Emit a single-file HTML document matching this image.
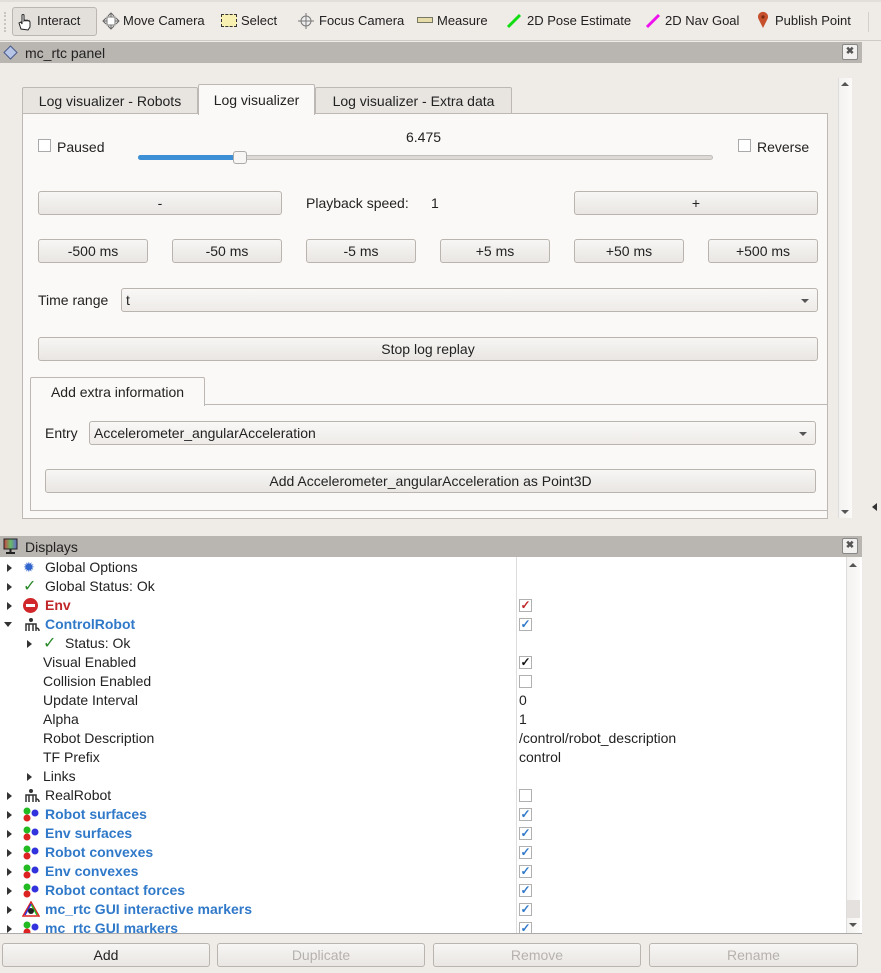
<!DOCTYPE html>
<html><head><meta charset="utf-8"><style>
*{box-sizing:border-box;margin:0;padding:0}
body{width:881px;height:973px;background:#efebe7;font-family:"Liberation Sans",sans-serif;font-size:14px;color:#222;position:relative;overflow:hidden}
.a{position:absolute}
.btn{position:absolute;border:1px solid #b9b4ae;border-radius:3px;background:linear-gradient(#f7f6f4,#e9e6e3);text-align:center;line-height:22px;height:24px;color:#222}
.dis{color:#b5b2ae}
.cb{position:absolute;width:13px;height:13px;border:1px solid #aaa;background:#fff}
.tb{position:absolute;top:12px;line-height:18px;font-size:13px;color:#222}
.row{position:absolute;height:19px;line-height:19px;white-space:nowrap}
.tri{position:absolute;width:0;height:0;border-top:4px solid transparent;border-bottom:4px solid transparent;border-left:5px solid #333}
.blue{color:#3079c9;font-weight:bold}
.chk{position:absolute;width:13px;height:13px;border:1px solid #b0b0b0;background:#fff;font-size:12px;line-height:11px;text-align:center;font-weight:bold}
.combo{position:absolute;border:1px solid #b9b4ae;border-radius:3px;background:linear-gradient(#f9f8f7,#eeebe8);height:24px;line-height:22px;padding-left:4px}
.combo:after{content:"";position:absolute;right:8px;top:10px;border-left:4px solid transparent;border-right:4px solid transparent;border-top:4px solid #555}
</style></head><body>
<div class="a" style="left:0;top:0;width:881px;height:2px;background:#e2ded9"></div>
<div class="a" style="left:4px;top:12px;width:2px;height:20px;border-left:2px dotted #c8c4bf"></div>
<div class="a" style="left:12px;top:7px;width:85px;height:29px;border:1px solid #bbb6b0;border-radius:3px;background:#e3dfdb"></div>
<svg class="a" style="left:16px;top:12px" width="20" height="20" viewBox="0 0 20 20"><path d="M5 17 L3 11 L5 10 L6 12 L6 3 Q7 2 8 3 L8 9 L9 8 L10 9 L11 8 L12 9 L13 8.5 L14 10 L14 15 L12 18 Z" fill="#fff" stroke="#222" stroke-width="1"/></svg>
<div class="tb" style="left:37px">Interact</div>
<svg class="a" style="left:102px;top:12px" width="18" height="18" viewBox="0 0 18 18"><path d="M9 1 L9 17 M1 9 L17 9 M6 4 L9 1 L12 4 M6 14 L9 17 L12 14 M4 6 L1 9 L4 12 M14 6 L17 9 L14 12" stroke="#666" fill="none"/><rect x="5" y="5" width="8" height="8" fill="#fff" stroke="#777"/></svg>
<div class="tb" style="left:123px">Move Camera</div>
<div class="a" style="left:221px;top:14px;width:16px;height:13px;background:#f7f0b0;border:1px dashed #333"></div>
<div class="tb" style="left:241px">Select</div>
<svg class="a" style="left:297px;top:12px" width="18" height="18" viewBox="0 0 18 18"><circle cx="9" cy="9" r="5" fill="#eee" stroke="#777"/><path d="M9 1 L9 17 M1 9 L17 9" stroke="#777"/></svg>
<div class="tb" style="left:319px">Focus Camera</div>
<div class="a" style="left:417px;top:17px;width:16px;height:6px;background:#e6dca8;border:1px solid #776"></div>
<div class="tb" style="left:437px">Measure</div>
<svg class="a" style="left:506px;top:13px" width="16" height="16"><path d="M2 14 L14 2" stroke="#1d1" stroke-width="3"/></svg>
<div class="tb" style="left:527px">2D Pose Estimate</div>
<svg class="a" style="left:645px;top:13px" width="16" height="16"><path d="M2 14 L14 2" stroke="#e1e" stroke-width="3"/></svg>
<div class="tb" style="left:665px">2D Nav Goal</div>
<svg class="a" style="left:757px;top:11px" width="12" height="18"><path d="M6 17 L1.5 8 A5 5 0 1 1 10.5 8 Z" fill="#c5502b"/><circle cx="6" cy="6" r="1.6" fill="#7a2a10"/></svg>
<div class="tb" style="left:775px">Publish Point</div>
<div class="a" style="left:868px;top:12px;width:1px;height:20px;background:#d5d0cb"></div>
<div class="a" style="left:0;top:40px;width:881px;height:1px;background:#cfcac5"></div>

<div class="a" style="left:0;top:42px;width:862px;height:21px;background:#b9b5b1"></div>
<svg class="a" style="left:3px;top:45px" width="15" height="15"><path d="M7.5 1 L14 7.5 L7.5 14 L1 7.5 Z" fill="#b6c4e6" stroke="#4a5a8a"/></svg>
<div class="a" style="left:25px;top:43px;line-height:20px;font-size:14px">mc_rtc panel</div>
<div class="a" style="left:842px;top:44px;width:16px;height:16px;border:1px solid #888;border-radius:2px;background:#f3f1ef;font-size:10px;line-height:14px;text-align:center;font-weight:bold;color:#555">✖</div>

<div class="a" style="left:838px;top:78px;width:14px;height:440px;background:linear-gradient(90deg,#f4f2f0,#fbfaf9);border-left:1px solid #ddd"></div>
<div class="a" style="left:841px;top:82px;border-left:4px solid transparent;border-right:4px solid transparent;border-bottom:4px solid #555"></div>
<div class="a" style="left:841px;top:510px;border-left:4px solid transparent;border-right:4px solid transparent;border-top:4px solid #555"></div>
<div class="a" style="left:872px;top:503px;border-top:4px solid transparent;border-bottom:4px solid transparent;border-right:5px solid #333"></div>

<div class="a" style="left:22px;top:87px;width:176px;height:27px;border:1px solid #bdb8b3;border-bottom:none;background:#e8e5e1;border-radius:2px 2px 0 0;text-align:center;line-height:27px">Log visualizer - Robots</div>
<div class="a" style="left:315px;top:87px;width:197px;height:27px;border:1px solid #bdb8b3;border-bottom:none;background:#e8e5e1;border-radius:2px 2px 0 0;text-align:center;line-height:27px">Log visualizer - Extra data</div>
<div class="a" style="left:22px;top:113px;width:806px;height:406px;border:1px solid #bdb8b3;background:#fbf9f7"></div>
<div class="a" style="left:198px;top:84px;width:117px;height:31px;border:1px solid #bdb8b3;border-bottom:none;background:#fbf9f7;border-radius:2px 2px 0 0;text-align:center;line-height:30px">Log visualizer</div>

<div class="cb" style="left:38px;top:139px"></div>
<div class="a" style="left:57px;top:138px;line-height:18px">Paused</div>
<div class="a" style="left:406px;top:128px;line-height:18px">6.475</div>
<div class="a" style="left:138px;top:155px;width:575px;height:5px;border-radius:3px;background:#dcd9d6;border:1px solid #c2beb9"></div>
<div class="a" style="left:138px;top:155px;width:102px;height:5px;border-radius:3px;background:#3d8fd6"></div>
<div class="a" style="left:233px;top:151px;width:14px;height:13px;border:1px solid #aaa;border-radius:3px;background:#f7f6f4"></div>
<div class="cb" style="left:738px;top:139px"></div>
<div class="a" style="left:757px;top:138px;line-height:18px">Reverse</div>

<div class="btn" style="left:38px;top:191px;width:244px">-</div>
<div class="a" style="left:306px;top:194px;line-height:18px">Playback speed:</div>
<div class="a" style="left:431px;top:194px;line-height:18px">1</div>
<div class="btn" style="left:574px;top:191px;width:244px">+</div>

<div class="btn" style="left:38px;top:239px;width:110px">-500 ms</div>
<div class="btn" style="left:172px;top:239px;width:110px">-50 ms</div>
<div class="btn" style="left:306px;top:239px;width:110px">-5 ms</div>
<div class="btn" style="left:440px;top:239px;width:110px">+5 ms</div>
<div class="btn" style="left:574px;top:239px;width:110px">+50 ms</div>
<div class="btn" style="left:708px;top:239px;width:110px">+500 ms</div>

<div class="a" style="left:38px;top:291px;line-height:18px">Time range</div>
<div class="combo" style="left:121px;top:288px;width:697px">t</div>
<div class="btn" style="left:38px;top:337px;width:780px">Stop log replay</div>

<div class="a" style="left:30px;top:404px;width:798px;height:107px;border:1px solid #bdb8b3;background:#fbf9f7"></div>
<div class="a" style="left:30px;top:377px;width:175px;height:29px;border:1px solid #bdb8b3;border-bottom:none;background:#fbf9f7;border-radius:2px 2px 0 0;text-align:center;line-height:28px">Add extra information</div>
<div class="a" style="left:45px;top:424px;line-height:18px">Entry</div>
<div class="combo" style="left:89px;top:421px;width:727px">Accelerometer_angularAcceleration</div>
<div class="btn" style="left:45px;top:469px;width:771px">Add Accelerometer_angularAcceleration as Point3D</div>

<div class="a" style="left:0;top:536px;width:862px;height:21px;background:#b9b5b1"></div>
<svg class="a" style="left:3px;top:538px" width="16" height="17"><defs><linearGradient id="g"><stop offset="0" stop-color="#c44"/><stop offset=".5" stop-color="#6b6"/><stop offset="1" stop-color="#66c"/></linearGradient></defs><rect x="1" y="1" width="13" height="10" fill="url(#g)" stroke="#222"/><path d="M7.5 11 L7.5 14 M3 15 L12 15" stroke="#222" stroke-width="2"/></svg>
<div class="a" style="left:25px;top:538px;line-height:19px">Displays</div>
<div class="a" style="left:842px;top:538px;width:16px;height:16px;border:1px solid #888;border-radius:2px;background:#f3f1ef;font-size:10px;line-height:14px;text-align:center;font-weight:bold;color:#555">✖</div>

<div class="a" style="left:0;top:557px;width:862px;height:377px;background:#fff;border-bottom:1px solid #aaa"></div>
<div class="a" style="left:516px;top:557px;width:1px;height:376px;background:#ddd"></div>
<div class="a" style="left:846px;top:557px;width:14px;height:376px;background:linear-gradient(90deg,#f4f2f0,#fbfaf9);border-left:1px solid #ddd"></div>
<div class="a" style="left:847px;top:900px;width:13px;height:18px;background:#e4e1de"></div>
<div class="a" style="left:849px;top:563px;border-left:4px solid transparent;border-right:4px solid transparent;border-bottom:4px solid #555"></div>
<div class="a" style="left:849px;top:923px;border-left:4px solid transparent;border-right:4px solid transparent;border-top:4px solid #555"></div>

<div style="position:absolute;left:0;top:558px;width:846px;height:375px;overflow:hidden">
<div class="tri" style="left:7px;top:6px"></div><div class="row" style="left:23px;top:0;color:#36c;font-size:14px">✹</div><div class="row" style="left:45px;top:0">Global Options</div>
<div class="tri" style="left:7px;top:25px"></div><div class="row" style="left:23px;top:19px;color:#2a8a2a;font-size:16px">✓</div><div class="row" style="left:45px;top:19px">Global Status: Ok</div>
<div class="tri" style="left:7px;top:44px"></div><div class="a" style="left:23px;top:40px;width:15px;height:15px;border-radius:50%;background:#d0282a"><div class="a" style="left:3px;top:6px;width:9px;height:3px;background:#fff"></div></div><div class="row" style="left:45px;top:38px;color:#c0282a;font-weight:bold">Env</div><div class="chk" style="left:519px;top:41px;color:#c0282a">✓</div>
<div class="a" style="left:4px;top:64px;border-left:4px solid transparent;border-right:4px solid transparent;border-top:5px solid #333"></div><svg class="a" style="left:23px;top:59px" width="18" height="16"><circle cx="8" cy="3" r="2" fill="#333"/><path d="M3 14 L3 7 L13 7 L13 14 M6 7 L6 14 M10 7 L10 14 M13 11 Q16 11 16 14" stroke="#333" stroke-width="1.5" fill="none"/></svg><div class="row blue" style="left:45px;top:57px">ControlRobot</div><div class="chk" style="left:519px;top:60px;color:#3079c9">✓</div>
<div class="tri" style="left:27px;top:82px"></div><div class="row" style="left:43px;top:76px;color:#2a8a2a;font-size:16px">✓</div><div class="row" style="left:65px;top:76px">Status: Ok</div>
<div class="row" style="left:43px;top:95px">Visual Enabled</div><div class="chk" style="left:519px;top:98px;color:#111">✓</div>
<div class="row" style="left:43px;top:114px">Collision Enabled</div><div class="chk" style="left:519px;top:117px"></div>
<div class="row" style="left:43px;top:133px">Update Interval</div><div class="row" style="left:519px;top:133px">0</div>
<div class="row" style="left:43px;top:152px">Alpha</div><div class="row" style="left:519px;top:152px">1</div>
<div class="row" style="left:43px;top:171px">Robot Description</div><div class="row" style="left:519px;top:171px">/control/robot_description</div>
<div class="row" style="left:43px;top:190px">TF Prefix</div><div class="row" style="left:519px;top:190px">control</div>
<div class="tri" style="left:27px;top:215px"></div><div class="row" style="left:43px;top:209px">Links</div>
<div class="tri" style="left:7px;top:234px"></div><svg class="a" style="left:23px;top:230px" width="18" height="16"><circle cx="8" cy="3" r="2" fill="#333"/><path d="M3 14 L3 7 L13 7 L13 14 M6 7 L6 14 M10 7 L10 14 M13 11 Q16 11 16 14" stroke="#333" stroke-width="1.5" fill="none"/></svg><div class="row" style="left:45px;top:228px">RealRobot</div><div class="chk" style="left:519px;top:231px"></div>

<div class="tri" style="left:7px;top:253px"></div><svg class="a" style="left:22px;top:249px" width="18" height="16"><circle cx="5" cy="4" r="3.5" fill="#2b2"/><circle cx="5" cy="11" r="3.5" fill="#d22"/><circle cx="13" cy="6" r="3.5" fill="#33d"/></svg><div class="row blue" style="left:45px;top:247px">Robot surfaces</div><div class="chk" style="left:519px;top:250px;color:#3079c9">✓</div>
<div class="tri" style="left:7px;top:272px"></div><svg class="a" style="left:22px;top:268px" width="18" height="16"><circle cx="5" cy="4" r="3.5" fill="#2b2"/><circle cx="5" cy="11" r="3.5" fill="#d22"/><circle cx="13" cy="6" r="3.5" fill="#33d"/></svg><div class="row blue" style="left:45px;top:266px">Env surfaces</div><div class="chk" style="left:519px;top:269px;color:#3079c9">✓</div>
<div class="tri" style="left:7px;top:291px"></div><svg class="a" style="left:22px;top:287px" width="18" height="16"><circle cx="5" cy="4" r="3.5" fill="#2b2"/><circle cx="5" cy="11" r="3.5" fill="#d22"/><circle cx="13" cy="6" r="3.5" fill="#33d"/></svg><div class="row blue" style="left:45px;top:285px">Robot convexes</div><div class="chk" style="left:519px;top:288px;color:#3079c9">✓</div>
<div class="tri" style="left:7px;top:310px"></div><svg class="a" style="left:22px;top:306px" width="18" height="16"><circle cx="5" cy="4" r="3.5" fill="#2b2"/><circle cx="5" cy="11" r="3.5" fill="#d22"/><circle cx="13" cy="6" r="3.5" fill="#33d"/></svg><div class="row blue" style="left:45px;top:304px">Env convexes</div><div class="chk" style="left:519px;top:307px;color:#3079c9">✓</div>
<div class="tri" style="left:7px;top:329px"></div><svg class="a" style="left:22px;top:325px" width="18" height="16"><circle cx="5" cy="4" r="3.5" fill="#2b2"/><circle cx="5" cy="11" r="3.5" fill="#d22"/><circle cx="13" cy="6" r="3.5" fill="#33d"/></svg><div class="row blue" style="left:45px;top:323px">Robot contact forces</div><div class="chk" style="left:519px;top:326px;color:#3079c9">✓</div>
<div class="tri" style="left:7px;top:348px"></div><svg class="a" style="left:22px;top:343px" width="18" height="17"><path d="M9 1 L17 15 L1 15 Z" fill="none" stroke="#d22" stroke-width="1.5"/><path d="M9 3 L15 14" stroke="#2b2" stroke-width="1.5"/><path d="M3 14 L9 3" stroke="#33d" stroke-width="1.5"/><circle cx="9" cy="10" r="3" fill="#222"/></svg><div class="row blue" style="left:45px;top:342px">mc_rtc GUI interactive markers</div><div class="chk" style="left:519px;top:345px;color:#3079c9">✓</div>
<div class="tri" style="left:7px;top:367px"></div><svg class="a" style="left:22px;top:363px" width="18" height="16"><circle cx="5" cy="4" r="3.5" fill="#2b2"/><circle cx="5" cy="11" r="3.5" fill="#d22"/><circle cx="13" cy="6" r="3.5" fill="#33d"/></svg><div class="row blue" style="left:45px;top:361px">mc_rtc GUI markers</div><div class="chk" style="left:519px;top:364px;color:#3079c9">✓</div>
</div>

<div class="btn" style="left:2px;top:943px;width:208px">Add</div>
<div class="btn dis" style="left:217px;top:943px;width:208px">Duplicate</div>
<div class="btn dis" style="left:433px;top:943px;width:208px">Remove</div>
<div class="btn dis" style="left:649px;top:943px;width:209px">Rename</div>
</body></html>
